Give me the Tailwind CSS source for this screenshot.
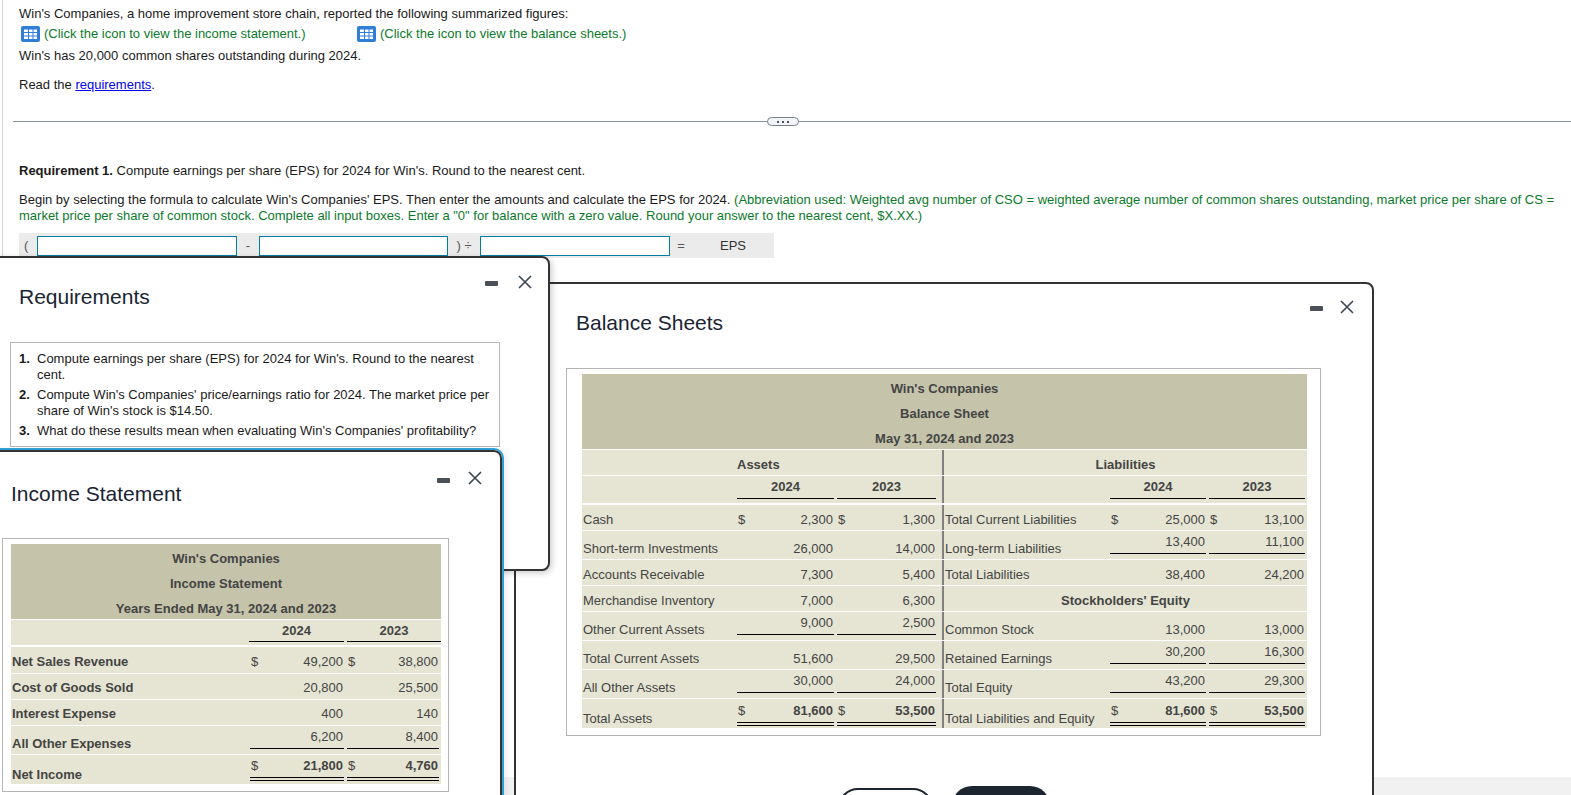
<!DOCTYPE html>
<html lang="en">
<head>
    <meta charset="UTF-8">
    <title>Win's Companies</title>
    <script src="https://cdn.jsdelivr.net/npm/@tailwindcss/browser@4"></script>
</head>
<body class="bg-white">
<div class="relative w-[1571px] h-[795px] overflow-hidden font-['Liberation_Sans',Arial,sans-serif] text-[13px] text-[#1a1a1a]">
    <!-- question -->
    <div class="h-full ml-[2px] border-l border-[#d4d4d4] pl-[16px] pt-[4px]">
        <p class="h-[19px] leading-[19px]">Win's Companies, a home improvement store chain, reported the following summarized figures:</p>
        <div class="flex h-[22px] items-center text-[#0a7a2a]">
            <div class="flex items-center w-[338px] gap-[4px] pl-[2px]">
                <svg class="w-[19px] h-[16px]" viewBox="0 0 19 16"><rect width="19" height="16" rx="2" fill="#2f7fd6"/><path d="M3 3.500h4V6H3zM8 3.500h3.500V6H8zM12.500 3.500h3.500V6h-3.500zM3 7h4v2.500H3zM8 7h3.500v2.500H8zM12.500 7h3.500v2.500h-3.500zM3 10.500h4V13H3zM8 10.500h3.500V13H8zM12.500 10.500h3.500V13h-3.500z" fill="#fff"/></svg>
                <span>(Click the icon to view the income statement.)</span>
            </div>
            <div class="flex items-center gap-[4px]">
                <svg class="w-[19px] h-[16px]" viewBox="0 0 19 16"><rect width="19" height="16" rx="2" fill="#2f7fd6"/><path d="M3 3.500h4V6H3zM8 3.500h3.500V6H8zM12.500 3.500h3.500V6h-3.500zM3 7h4v2.500H3zM8 7h3.500v2.500H8zM12.500 7h3.500v2.500h-3.500zM3 10.500h4V13H3zM8 10.500h3.500V13H8zM12.500 10.500h3.500V13h-3.500z" fill="#fff"/></svg>
                <span>(Click the icon to view the balance sheets.)</span>
            </div>
        </div>
        <p class="h-[19px] leading-[19px] mt-px">Win's has 20,000 common shares outstanding during 2024.</p>
        <p class="mt-[10px] h-[19px] leading-[19px]">Read the <a href="#" class="text-[#0000ee] underline">requirements</a>.</p>

        <div class="relative mt-[27px] -ml-[6px] h-px bg-[#8a9099]">
            <div class="absolute left-[754px] -top-[4px] w-[32px] h-[9px] rounded-full border border-[#79808a] bg-[#f2f4f7] flex items-center justify-center gap-[3px]">
                <span class="w-[2px] h-[2px] bg-[#4b5563]"></span>
                <span class="w-[2px] h-[2px] bg-[#4b5563]"></span>
                <span class="w-[2px] h-[2px] bg-[#4b5563]"></span>
            </div>
        </div>

        <p class="mt-[39px] h-[19px] leading-[19px]"><b>Requirement 1.</b> Compute earnings per share (EPS) for 2024 for Win's. Round to the nearest cent.</p>
        <p class="mt-[12px] leading-[16px] text-[#0a7a2a] w-[1540px]"><span class="text-[#1a1a1a]">Begin by selecting the formula to calculate Win's Companies' EPS. Then enter the amounts and calculate the EPS for 2024.</span> (Abbreviation used: Weighted avg number of CSO = weighted average number of common shares outstanding, market price per share of CS = market price per share of common stock. Complete all input boxes. Enter a "0" for balance with a zero value. Round your answer to the nearest cent, $X.XX.)</p>
        <div class="flex items-center mt-[9px] w-[755px] h-[25px] bg-[#ebebeb] text-[#555]">
            <span class="w-[18px] pl-[5px]">(</span>
            <div class="w-[200px] h-[20px] bg-white border border-[#007fa3]"></div>
            <span class="w-[22px] text-center">-</span>
            <div class="w-[189px] h-[20px] bg-white border border-[#007fa3]"></div>
            <span class="w-[32px] text-center">) ÷</span>
            <div class="w-[190px] h-[20px] bg-white border border-[#007fa3]"></div>
            <span class="w-[22px] text-center">=</span>
            <span class="w-[82px] text-center text-[#333]">EPS</span>
        </div>
    </div>

    <!-- strip along the bottom of the page -->
    <div class="absolute left-0 right-0 bottom-0 h-[18px] bg-[#f1f1f1]"></div>

    <!-- balance sheets window -->
    <section class="absolute left-[514px] top-[282px] w-[860px] h-[560px] bg-white border-2 border-[#333] rounded-[8px]">
        <h2 class="ml-[60px] mt-[25px] h-[28px] leading-[28px] text-[21px] text-[#1a2433]">Balance Sheets</h2>
        <button class="absolute right-[49px] top-[22px] w-[13px] h-[5px] rounded-[1px] bg-[#4a5058]"></button>
        <svg class="absolute right-[17px] top-[15px] w-[16px] h-[16px]" viewBox="0 0 16 16"><path d="M2 2l12 12M14 2L2 14" stroke="#3f4954" stroke-width="1.700" fill="none"/></svg>
        <div class="ml-[50px] mt-[31px] w-[755px] h-[368px] border border-[#b5b5b5] pl-[15px] pt-[5px]">
            <div id="balance" class="w-[725px] text-[#444]"></div>
        </div>
        <div class="flex items-start ml-[322px] mt-[50px] gap-[19px]">
            <button class="mt-[2px] w-[95px] h-[40px] rounded-[20px] border-2 border-[#1d2530] bg-white"></button>
            <button class="w-[98px] h-[40px] rounded-[20px] bg-[#1d2530]"></button>
        </div>
    </section>

    <!-- requirements window -->
    <section class="absolute -left-[10px] top-[256px] w-[560px] h-[315px] bg-white border-2 border-[#333] rounded-[8px] shadow-[2px_2px_6px_rgba(0,0,0,0.2)]">
        <h2 class="ml-[27px] mt-[25px] h-[28px] leading-[28px] text-[21px] text-[#1a2433]">Requirements</h2>
        <button class="absolute right-[50px] top-[23px] w-[13px] h-[5px] rounded-[1px] bg-[#4a5058]"></button>
        <svg class="absolute right-[15px] top-[16px] w-[16px] h-[16px]" viewBox="0 0 16 16"><path d="M2 2l12 12M14 2L2 14" stroke="#3f4954" stroke-width="1.700" fill="none"/></svg>
        <ol class="ml-[18px] mt-[31px] w-[490px] h-[105px] border border-[#b5b5b5] pt-[8px] pl-[8px] pr-[8px] leading-[16px]">
            <li class="flex"><b class="w-[18px] shrink-0">1.</b><span>Compute earnings per share (EPS) for 2024 for Win's. Round to the nearest cent.</span></li>
            <li class="flex mt-[4px]"><b class="w-[18px] shrink-0">2.</b><span>Compute Win's Companies' price/earnings ratio for 2024. The market price per share of Win's stock is $14.50.</span></li>
            <li class="flex mt-[4px]"><b class="w-[18px] shrink-0">3.</b><span>What do these results mean when evaluating Win's Companies' profitability?</span></li>
        </ol>
    </section>

    <!-- income statement window -->
    <section class="absolute -left-[10px] top-[450px] w-[512px] h-[420px] bg-white border-2 border-[#333] rounded-[8px] outline-2 outline-[#2f9fd8] shadow-[4px_0_6px_rgba(0,0,0,0.08)]">
        <h2 class="ml-[19px] mt-[28px] h-[28px] leading-[28px] text-[21px] text-[#1a2433]">Income Statement</h2>
        <button class="absolute right-[50px] top-[26px] w-[13px] h-[5px] rounded-[1px] bg-[#4a5058]"></button>
        <svg class="absolute right-[17px] top-[18px] w-[16px] h-[16px]" viewBox="0 0 16 16"><path d="M2 2l12 12M14 2L2 14" stroke="#3f4954" stroke-width="1.700" fill="none"/></svg>
        <div class="ml-[10px] mt-[30px] w-[447px] h-[254px] border border-[#b5b5b5] pl-[8px] pt-[5px]">
            <div id="income" class="w-[430px] text-[#444]"></div>
        </div>
    </section>
</div>

<script>
    // amount cells: ruled ones sit at the top of the row, plain ones on the label's baseline
    function amounts(list, pb, dbl) {
        return list.map(function (a) {
            var box = 'h-full items-end ' + pb;
            if (a.r == 1) box = 'h-[23px] items-start pt-px border-b border-black';
            if (a.r == 2) box = dbl + ' items-start border-b-[4px] border-double border-black font-bold';
            return `<div class="mr-[2px] ml-px"><div class="flex justify-between ${box}"><span class="pl-px font-normal">${a.s ? '$' : ''}</span><span class="pr-px">${a.v}</span></div></div>`;
        }).join('');
    }
    function title(lines) {
        return '<div class="h-[76px] bg-[#c5c3aa] font-bold text-center border-b border-white">' +
            lines.map(function (t) { return `<div class="h-[25px] leading-[30px]">${t}</div>`; }).join('') + '</div>';
    }
    function v(text, rule, sign) { return { v: text, r: rule, s: sign }; }

    // income statement
    var inc = [
        [27, 'pb-[2px]', 'Net Sales Revenue', [v('49,200', 0, 1), v('38,800', 0, 1)]],
        [26, 'pb-[2px]', 'Cost of Goods Sold', [v('20,800'), v('25,500')]],
        [26, 'pb-[2px]', 'Interest Expense', [v('400'), v('140')]],
        [29, 'pb-[1px]', 'All Other Expenses', [v('6,200', 1), v('8,400', 1)]],
        [30, 'pb-0', 'Net Income', [v('21,800', 2, 1), v('4,760', 2, 1)]]
    ];
    document.getElementById('income').innerHTML = title(["Win's Companies", 'Income Statement', 'Years Ended May 31, 2024 and 2023']) +
        `<div class="grid grid-cols-[238px_97px_95px] h-[27px] bg-[#e6e5d3] border-b-2 border-white font-bold text-center">
            <div></div><div class="mr-[2px] h-[22px] leading-[22px] border-b border-black">2024</div><div class="ml-px h-[22px] leading-[22px] border-b border-black">2023</div>
        </div>` +
        inc.map(function (r) {
            return `<div class="grid grid-cols-[238px_97px_95px] bg-[#e6e5d3] border-b border-white" style="height:${r[0]}px">
                <div class="pl-px flex items-end font-bold ${r[1]}">${r[2]}</div>${amounts(r[3], r[1], 'h-[26px] pt-px')}
            </div>`;
        }).join('');

    // balance sheet: height, label, 2024, 2023, right label, 2024, 2023
    var bal = [
        [26, 'Cash', [v('2,300', 0, 1), v('1,300', 0, 1)], 'Total Current Liabilities', [v('25,000', 0, 1), v('13,100', 0, 1)]],
        [29, 'Short-term Investments', [v('26,000'), v('14,000')], 'Long-term Liabilities', [v('13,400', 1), v('11,100', 1)]],
        [26, 'Accounts Receivable', [v('7,300'), v('5,400')], 'Total Liabilities', [v('38,400'), v('24,200')]],
        [26, 'Merchandise Inventory', [v('7,000'), v('6,300')], null, null],
        [29, 'Other Current Assets', [v('9,000', 1), v('2,500', 1)], 'Common Stock', [v('13,000'), v('13,000')]],
        [29, 'Total Current Assets', [v('51,600'), v('29,500')], 'Retained Earnings', [v('30,200', 1), v('16,300', 1)]],
        [29, 'All Other Assets', [v('30,000', 1), v('24,000', 1)], 'Total Equity', [v('43,200', 1), v('29,300', 1)]],
        [30, 'Total Assets', [v('81,600', 2, 1), v('53,500', 2, 1)], 'Total Liabilities and Equity', [v('81,600', 2, 1), v('53,500', 2, 1)]]
    ];
    var cols = 'grid grid-cols-[154px_100px_102px_4px_2px_165px_99px_99px]';
    document.getElementById('balance').innerHTML = title(["Win's Companies", 'Balance Sheet', 'May 31, 2024 and 2023']) +
        `<div class="${cols} h-[26px] bg-[#e6e5d3] border-b border-white font-bold">
            <div></div><div class="pl-px h-[25px] leading-[29px]">Assets</div><div></div><div></div><div class="bg-[#808080]"></div><div class="col-span-3 h-[25px] leading-[29px] text-center">Liabilities</div>
        </div>
        <div class="${cols} h-[29px] bg-[#e6e5d3] border-b-2 border-white font-bold text-center">
            <div></div><div class="mr-[2px] ml-px h-[23px] leading-[22px] border-b border-black">2024</div><div class="mr-[2px] ml-px h-[23px] leading-[22px] border-b border-black">2023</div><div></div><div class="bg-[#808080]"></div><div></div>
            <div class="mr-[2px] ml-px h-[23px] leading-[22px] border-b border-black">2024</div><div class="mr-[2px] ml-px h-[23px] leading-[22px] border-b border-black">2023</div>
        </div>` +
        bal.map(function (r) {
            var pb = r[0] == 30 ? 'pb-0' : 'pb-[1px]';
            var right = r[3]
                ? `<div class="pl-px flex items-end ${pb}">${r[3]}</div>${amounts(r[4], pb, 'h-[27px] pt-[2px]')}`
                : '<div class="col-span-3 h-[25px] text-center font-bold leading-[30px]">Stockholders\' Equity</div>';
            return `<div class="${cols} bg-[#e6e5d3] border-b border-white" style="height:${r[0]}px">
                <div class="pl-px flex items-end ${pb}">${r[1]}</div>${amounts(r[2], pb, 'h-[27px] pt-[2px]')}<div></div><div class="bg-[#808080]"></div>${right}
            </div>`;
        }).join('');
</script>
</body>
</html>
